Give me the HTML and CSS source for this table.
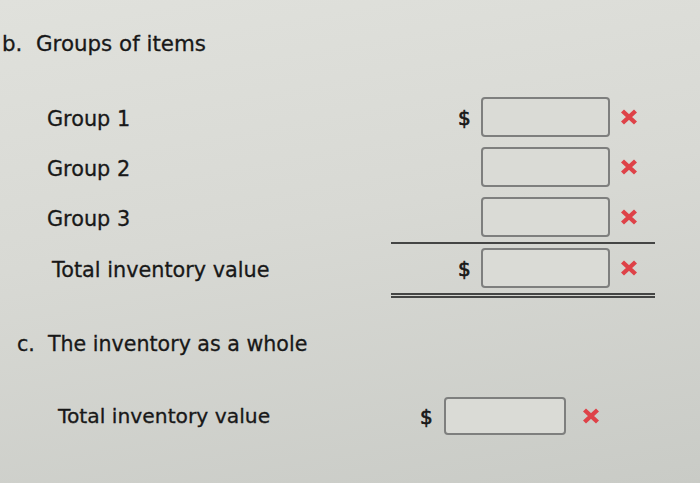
FILE: index.html
```html
<!DOCTYPE html>
<html>
<head>
<meta charset="utf-8">
<link rel="stylesheet" href="styles.css">
</head>
<body>
<div class="page">
  <div class="title title-b">b.&nbsp; Groups of items</div>
  <div class="rows-b">
    <div class="row">
      <div class="label">Group 1</div>
      <div class="dollar">$</div>
      <div class="box"></div>
      <svg class="xmark" viewBox="0 0 18 16"><path d="M2.5 2 L15.5 14 M15.5 2 L2.5 14"/></svg>
    </div>
    <div class="row">
      <div class="label">Group 2</div>
      <div class="dollar"></div>
      <div class="box"></div>
      <svg class="xmark" viewBox="0 0 18 16"><path d="M2.5 2 L15.5 14 M15.5 2 L2.5 14"/></svg>
    </div>
    <div class="row">
      <div class="label">Group 3</div>
      <div class="dollar"></div>
      <div class="box"></div>
      <svg class="xmark" viewBox="0 0 18 16"><path d="M2.5 2 L15.5 14 M15.5 2 L2.5 14"/></svg>
    </div>
    <div class="rule single"></div>
    <div class="row row-total">
      <div class="label">Total inventory value</div>
      <div class="dollar">$</div>
      <div class="box"></div>
      <svg class="xmark" viewBox="0 0 18 16"><path d="M2.5 2 L15.5 14 M15.5 2 L2.5 14"/></svg>
    </div>
    <div class="rule double"></div>
  </div>
  <div class="title title-c">c.&nbsp; The inventory as a whole</div>
  <div class="row row-c">
    <div class="label">Total inventory value</div>
    <div class="dollar">$</div>
    <div class="box"></div>
    <svg class="xmark" viewBox="0 0 18 16"><path d="M2.5 2 L15.5 14 M15.5 2 L2.5 14"/></svg>
  </div>
</div>
</body>
</html>
```
FILE: styles.css
```css
html, body {
  margin: 0;
  padding: 0;
}
body {
  width: 700px;
  height: 483px;
  overflow: hidden;
  font-family: "DejaVu Sans", Verdana, sans-serif;
  color: #181818;
  -webkit-text-stroke: 0.3px #181818;
  background: linear-gradient(170deg, #e0e1dc 0%, #d8d9d4 45%, #c9cbc6 100%);
}
.page {
  position: relative;
  height: 483px;
}
.title {
  font-size: 20.6px;
  line-height: 28px;
  white-space: nowrap;
}
.title-b {
  font-size: 21.4px;
  padding: 30px 0 0 2px;
}
.rows-b {
  margin-top: 34px;
}
.row {
  display: flex;
  align-items: center;
  height: 50px;
  font-size: 20.8px;
}
.row .label {
  width: 458px;
  padding: 3px 0 0 47px;
  box-sizing: border-box;
  white-space: nowrap;
}
.row-total {
  height: 48px;
}
.row-total .label {
  padding-left: 52px;
}
.dollar {
  width: 13px;
  margin-right: 10px;
  padding-top: 2px;
  font-size: 20px;
  -webkit-text-stroke: 0.7px #181818;
}
.box {
  width: 129px;
  height: 40px;
  box-sizing: border-box;
  border: 2px solid #7e7f7e;
  border-radius: 4px;
  background: #dadbd6;
  margin-right: 10px;
}
.xmark {
  width: 18px;
  height: 16px;
  fill: none;
  stroke: #de4248;
  stroke-width: 4.4;
  stroke-linecap: butt;
}
.rule {
  margin-left: 391px;
  width: 264px;
}
.rule.single {
  border-top: 2px solid #444544;
}
.rule.double {
  border-top: 5px double #444544;
  margin-top: 1px;
}
.title-c {
  margin-top: 32px;
  padding-left: 17px;
}
.row-c {
  margin-top: 33px;
  font-size: 20.3px;
}
.row-c .label {
  width: 420px;
  padding: 0 0 0 58px;
}
.row-c .dollar {
  width: 14px;
  margin-right: 10px;
}
.row-c .box {
  width: 122px;
  height: 38px;
  margin-right: 16px;
}
```
